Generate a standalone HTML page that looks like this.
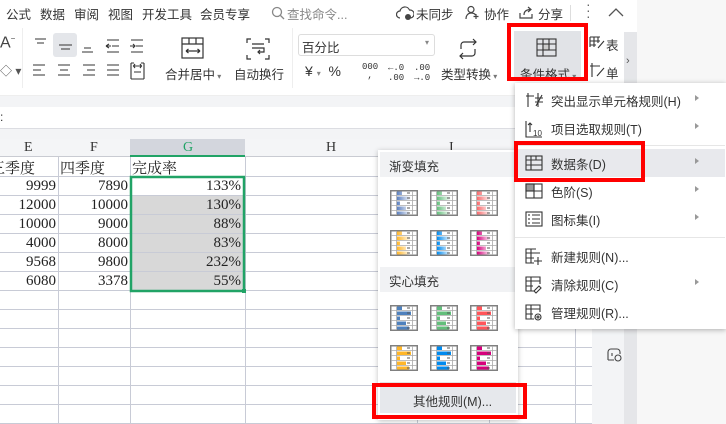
<!DOCTYPE html>
<html><head><meta charset="utf-8"><style>
*{margin:0;padding:0;box-sizing:border-box}
body{width:726px;height:424px;position:relative;overflow:hidden;background:#f7f7f7;font-family:"Liberation Sans","Noto Sans CJK SC",sans-serif;font-size:12px;color:#333}
.a{position:absolute}
.t{position:absolute;white-space:nowrap}
.cell{position:absolute;font-family:"Liberation Serif","Noto Serif CJK SC",serif;font-size:15px;color:#222;text-align:right;white-space:nowrap}
.mi{position:absolute;left:0;width:210px;height:28px}
.mi span{position:absolute;left:36px;top:5px;font-size:12.5px;color:#333}
.mi b{position:absolute;left:180px;top:9px;width:0;height:0;border-left:4px solid #999;border-top:3px solid transparent;border-bottom:3px solid transparent}
.mi svg{position:absolute;left:10px;top:6px}
.tm{position:absolute;top:4px;font-size:12.5px;color:#333;white-space:nowrap}
</style></head><body>
<div class="a" style="left:0;top:0;width:637px;height:424px;background:#fff"></div>
<div class="tm" style="left:6px">公式</div>
<div class="tm" style="left:40px">数据</div>
<div class="tm" style="left:74px">审阅</div>
<div class="tm" style="left:108px">视图</div>
<div class="tm" style="left:142px">开发工具</div>
<div class="tm" style="left:200px">会员专享</div>
<svg class="a" style="left:271px;top:6px" width="14" height="14"><circle cx="6" cy="6" r="4.5" fill="none" stroke="#888" stroke-width="1.3"/><path d="M9.5 9.5L13 13" stroke="#888" stroke-width="1.3"/></svg>
<div class="t" style="left:287px;top:4px;font-size:12.5px;color:#888">查找命令...</div>
<svg class="a" style="left:396px;top:6px" width="18" height="14"><path d="M4 12a3.5 3.5 0 0 1 0-7a5 5 0 0 1 9.5-1a4 4 0 0 1 1 8" fill="none" stroke="#444" stroke-width="1.2"/><circle cx="12" cy="11" r="3" fill="#444"/></svg>
<div class="t" style="left:416px;top:4px;font-size:12.5px">未同步</div>
<svg class="a" style="left:465px;top:5px" width="16" height="15"><circle cx="6" cy="4.5" r="3" fill="none" stroke="#444" stroke-width="1.2"/><path d="M1 14c0-4 2.5-6 5-6s4 1 4.5 2M11 9v5M8.5 11.5h5" fill="none" stroke="#444" stroke-width="1.2"/></svg>
<div class="t" style="left:484px;top:4px;font-size:12.5px">协作</div>
<svg class="a" style="left:518px;top:5px" width="16" height="15"><path d="M2 8v5h12V9M6 10c0-4 3-5.5 7-5.5M10 2l3 2.5-3 2.5" fill="none" stroke="#444" stroke-width="1.2"/></svg>
<div class="t" style="left:538px;top:4px;font-size:12.5px">分享</div>
<div class="a" style="left:570px;top:5px;width:1px;height:16px;background:#ddd"></div>
<div class="t" style="left:586px;top:1px;font-size:14px;color:#666;line-height:6px">·<br>·<br>·</div>
<svg class="a" style="left:608px;top:7px" width="16" height="10"><path d="M1 9l7-7 7 7" fill="none" stroke="#555" stroke-width="1.3"/></svg>
<div class="t" style="left:0;top:34px;font-size:16px;color:#444">A<sup style="font-size:8px">−</sup></div>
<div class="t" style="left:0;top:62px;font-size:12px;color:#555">◇ ▾</div>
<div class="a" style="left:22px;top:28px;width:1px;height:60px;background:#eee"></div>
<div class="a" style="left:53px;top:33px;width:24px;height:24px;background:#e4e6ea;border-radius:3px"></div>
<svg class="a" style="left:30px;top:35px" width="125" height="24" stroke="#333" stroke-width="1.1" fill="none">
<path d="M5 4h11M7 8h7"/><path d="M29 10h13M31 14h9"/><path d="M54 13h7M52 17h11"/><path d="M77 5h12M77 17h12M82 11h7M76 11l3-2M76 11l3 2M76 11h5"/><path d="M101 5h12M101 17h12M106 11h7M100 11h5M103 9l2 2-2 2"/></svg>
<svg class="a" style="left:30px;top:60px" width="125" height="22" stroke="#333" stroke-width="1.1" fill="none">
<path d="M3 5h12M3 10h8M3 15h12"/><path d="M28 5h12M30 10h8M28 15h12"/><path d="M53 5h12M57 10h8M53 15h12"/><path d="M77 5h12M77 10h12M77 15h12"/><path d="M101 3v16M114 3v16M101 3h3M111 3h3M101 19h13M104 6h7M105 4l-1.5 2 1.5 2M110 4l1.5 2-1.5 2M104 12h7"/></svg>
<svg class="a" style="left:180px;top:36px" width="26" height="26" stroke="#333" stroke-width="1.2" fill="none"><rect x="2" y="2" width="21" height="20"/><path d="M2 8h21M9 2v6M16 2v6M6 15h14M6 15l2.5-2M6 15l2.5 2M20 15l-2.5-2M20 15l-2.5 2"/></svg>
<div class="t" style="left:165px;top:64px;font-size:12.5px">合并居中<span style="font-size:8px;color:#777"> ▾</span></div>
<svg class="a" style="left:245px;top:37px" width="26" height="24" stroke="#333" stroke-width="1.2" fill="none"><path d="M2 6V2h4M20 2h4v4M2 18v4h4M24 18v4h-4M7 7h12M7 11h12v4h-6M15 13l-2 2 2 2"/></svg>
<div class="t" style="left:234px;top:64px;font-size:12.5px">自动换行</div>
<div class="a" style="left:292px;top:28px;width:1px;height:60px;background:#eee"></div>
<div class="a" style="left:298px;top:34px;width:137px;height:22px;border:1px solid #ddd;border-radius:3px"></div>
<div class="t" style="left:302px;top:37px;font-size:12.5px">百分比</div>
<div class="t" style="left:425px;top:38px;font-size:8px;color:#888">▾</div>
<div class="t" style="left:305px;top:63px;font-size:14px">¥ <span style="font-size:8px;color:#888">▾</span>&nbsp; %</div>
<div class="t" style="left:362px;top:63px;font-size:9px;line-height:9px;font-family:'Liberation Mono',monospace">000<br>&nbsp;,</div>
<div class="t" style="left:388px;top:63px;font-size:9px;line-height:10px;font-family:'Liberation Mono',monospace">←.0<br>.00</div>
<div class="t" style="left:414px;top:63px;font-size:9px;line-height:10px;font-family:'Liberation Mono',monospace">.00<br>→.0</div>
<svg class="a" style="left:456px;top:37px" width="24" height="24" stroke="#333" stroke-width="1.2" fill="none"><path d="M5 12V8a3 3 0 0 1 3-3h12M17 2l3 3-3 3M19 12v4a3 3 0 0 1-3 3H4M7 16l-3 3 3 3"/></svg>
<div class="t" style="left:441px;top:64px;font-size:12.5px">类型转换<span style="font-size:8px;color:#777"> ▾</span></div>
<div class="a" style="left:514px;top:31px;width:67px;height:48px;background:#e1e3e7"></div>
<svg class="a" style="left:536px;top:38px" width="22" height="20" stroke="#333" stroke-width="1.1" fill="none"><rect x="1" y="1" width="19" height="17"/><path d="M1 6h19M1 12h19M7 1v17M13 1v11"/><rect x="7" y="6" width="6" height="6" fill="#ccc"/></svg>
<div class="t" style="left:520px;top:64px;font-size:12.5px">条件格式<span style="font-size:8px;color:#777"> ▾</span></div>
<div class="a" style="left:507px;top:23px;width:81px;height:58px;border:4px solid #f00"></div>
<svg class="a" style="left:589px;top:36px" width="16" height="14" stroke="#333" stroke-width="1.1" fill="none"><path d="M1 1h10M1 5h10M1 9h6M1 1v10M5 1v10M9 1v6M15 5l-6 7"/></svg>
<div class="t" style="left:606px;top:35px;font-size:12.5px">表</div>
<svg class="a" style="left:589px;top:62px" width="16" height="16" stroke="#333" stroke-width="1.1" fill="none"><path d="M3 1v14M1 4h10M15 6l-7 8"/></svg>
<div class="t" style="left:606px;top:63px;font-size:12.5px">单</div>
<div class="a" style="left:624px;top:32px;width:13px;height:392px;background:#e5e6e9"></div>
<div class="t" style="left:626px;top:55px;font-size:11px;color:#555">›</div>
<div class="a" style="left:0;top:95px;width:624px;height:12px;background:#f3f4f6;border-top:1px solid #eee"></div>
<div class="a" style="left:0;top:107px;width:624px;height:22px;background:#fff;border-bottom:1px solid #dcdde2"></div>
<div class="t" style="left:0;top:110px;font-size:12px">:</div>
<div class="a" style="left:0;top:129px;width:624px;height:10px;background:#f3f4f6"></div>
<div class="a" style="left:0;top:139px;width:592px;height:18px;background:#f4f5f7;border-bottom:1px solid #c9cbd2"></div>
<div class="a" style="left:130px;top:139px;width:115px;height:18px;background:#d3d6dd;border-bottom:2px solid #21a366"></div>
<div class="t" style="left:24px;top:140px;font-family:'Liberation Serif',serif;font-size:14px">E</div>
<div class="t" style="left:90px;top:140px;font-family:'Liberation Serif',serif;font-size:14px">F</div>
<div class="t" style="left:183px;top:140px;font-family:'Liberation Serif',serif;font-size:14px;color:#21a366">G</div>
<div class="t" style="left:326px;top:140px;font-family:'Liberation Serif',serif;font-size:14px">H</div>
<div class="t" style="left:449px;top:140px;font-family:'Liberation Serif',serif;font-size:14px">I</div>
<svg class="a" style="left:0;top:157px" width="592" height="267">
<g stroke="#c8cbd6" stroke-width="1">
<path d="M0 19.5h592M0 38.5h592M0 57.5h592M0 76.5h592M0 95.5h592M0 114.5h592M0 133.5h592M0 152.5h592M0 171.5h592M0 190.5h592M0 209.5h592M0 228.5h592M0 247.5h592M0 266.5h592"/>
<path d="M58.5 0v267M130.5 0v267M245.5 0v267M417.5 0v267M489.5 0v267M575.5 0v267"/>
</g>
<rect x="132" y="39" width="112" height="95" fill="#d8d8d8"/>
<g stroke="#c8cbd6"><path d="M132 57.5h112M132 76.5h112M132 95.5h112M132 114.5h112"/></g>
<rect x="131" y="20" width="113" height="114" fill="none" stroke="#21a366" stroke-width="2.5"/>
<rect x="242" y="132" width="4" height="4" fill="#21a366"/>
</svg>
<div class="a" style="left:592px;top:139px;width:32px;height:285px;background:#f3f4f6"></div>
<div class="cell" style="left:-10px;top:157px;text-align:left;font-family:'Noto Serif CJK SC',serif">三季度</div>
<div class="cell" style="left:60px;top:157px;text-align:left;font-family:'Noto Serif CJK SC',serif">四季度</div>
<div class="cell" style="left:132px;top:157px;text-align:left;font-family:'Noto Serif CJK SC',serif">完成率</div>
<div class="cell" style="left:0;top:178px;width:56px">9999</div>
<div class="cell" style="left:0;top:197px;width:56px">12000</div>
<div class="cell" style="left:0;top:216px;width:56px">10000</div>
<div class="cell" style="left:0;top:235px;width:56px">4000</div>
<div class="cell" style="left:0;top:254px;width:56px">9568</div>
<div class="cell" style="left:0;top:273px;width:56px">6080</div>
<div class="cell" style="left:60px;top:178px;width:68px">7890</div>
<div class="cell" style="left:60px;top:197px;width:68px">10000</div>
<div class="cell" style="left:60px;top:216px;width:68px">9000</div>
<div class="cell" style="left:60px;top:235px;width:68px">8000</div>
<div class="cell" style="left:60px;top:254px;width:68px">9800</div>
<div class="cell" style="left:60px;top:273px;width:68px">3378</div>
<div class="cell" style="left:132px;top:178px;width:109px">133%</div>
<div class="cell" style="left:132px;top:197px;width:109px">130%</div>
<div class="cell" style="left:132px;top:216px;width:109px">88%</div>
<div class="cell" style="left:132px;top:235px;width:109px">83%</div>
<div class="cell" style="left:132px;top:254px;width:109px">232%</div>
<div class="cell" style="left:132px;top:273px;width:109px">55%</div>
<svg class="a" style="left:606px;top:348px" width="16" height="14" stroke="#444" stroke-width="1.1" fill="none"><path d="M2 12V4a3 3 0 0 1 3-3h6a3 3 0 0 1 3 3v2M2 12h6M6 5v3"/><circle cx="12" cy="10" r="3"/></svg>
<div class="a" style="left:378px;top:150px;width:140px;height:270px;background:#fff;box-shadow:0 1px 5px rgba(0,0,0,.25)"></div>
<div class="a" style="left:380px;top:152px;width:136px;height:25px;background:#f1f2f4"></div>
<div class="t" style="left:389px;top:156px;font-size:12.5px">渐变填充</div>
<div class="a" style="left:380px;top:267px;width:136px;height:25px;background:#f1f2f4"></div>
<div class="t" style="left:389px;top:271px;font-size:12.5px">实心填充</div>
<div class="a" style="left:380px;top:382px;width:136px;height:1px;background:#e3e3e3"></div>
<div class="a" style="left:380px;top:386px;width:136px;height:27px;background:#e6e8ec"></div>
<div class="t" style="left:413px;top:391px;font-size:12.5px">其他规则(M)...</div>
<div class="a" style="left:372px;top:383px;width:155px;height:36px;border:4px solid #f00"></div>
<svg class="a" style="left:378px;top:150px" width="140" height="230">
<defs>
<linearGradient id="g1"><stop offset="0" stop-color="#5b7fbf"/><stop offset="1" stop-color="#fff"/></linearGradient>
<linearGradient id="g2"><stop offset="0" stop-color="#63be7b"/><stop offset="1" stop-color="#fff"/></linearGradient>
<linearGradient id="g3"><stop offset="0" stop-color="#f8696b"/><stop offset="1" stop-color="#fff"/></linearGradient>
<linearGradient id="g4"><stop offset="0" stop-color="#ffb628"/><stop offset="1" stop-color="#fff"/></linearGradient>
<linearGradient id="g5"><stop offset="0" stop-color="#008aef"/><stop offset="1" stop-color="#fff"/></linearGradient>
<linearGradient id="g6"><stop offset="0" stop-color="#d6007b"/><stop offset="1" stop-color="#fff"/></linearGradient>
<g id="grid" fill="none" stroke="#808080"><rect x="0.75" y="0.75" width="26.5" height="24.5" stroke-width="1.5"/><path d="M6.5 1v24M22.5 1v24M1 5.5h26M1 10.5h26M1 15.5h26M1 20.5h26" stroke-width="0.8" stroke="#aaa"/><path d="M17 3h3M17 8h3M17 13h3M17 18h3M17 23h3" stroke="#555"/></g>
<path id="b" d="M7 1.5h5v3.5h-5zM7 6.5h14v3.5h-14zM7 11.5h3v3.5h-3zM7 16.5h9v3.5h-9zM7 21.5h12v3.5h-12z"/>
</defs>
<g transform="translate(12,40)"><use href="#b" fill="url(#g1)"/><use href="#grid"/></g>
<g transform="translate(52,40)"><use href="#b" fill="url(#g2)"/><use href="#grid"/></g>
<g transform="translate(92,40)"><use href="#b" fill="url(#g3)"/><use href="#grid"/></g>
<g transform="translate(12,80)"><use href="#b" fill="url(#g4)"/><use href="#grid"/></g>
<g transform="translate(52,80)"><use href="#b" fill="url(#g5)"/><use href="#grid"/></g>
<g transform="translate(92,80)"><use href="#b" fill="url(#g6)"/><use href="#grid"/></g>
<g transform="translate(12,155)"><use href="#b" fill="#4f81bd"/><use href="#grid"/></g>
<g transform="translate(52,155)"><use href="#b" fill="#63be7b"/><use href="#grid"/></g>
<g transform="translate(92,155)"><use href="#b" fill="#ff555a"/><use href="#grid"/></g>
<g transform="translate(12,195)"><use href="#b" fill="#ffb628"/><use href="#grid"/></g>
<g transform="translate(52,195)"><use href="#b" fill="#008aef"/><use href="#grid"/></g>
<g transform="translate(92,195)"><use href="#b" fill="#d6007b"/><use href="#grid"/></g>
</svg>
<div class="a" style="left:515px;top:83px;width:211px;height:246px;background:#fff;box-shadow:0 1px 5px rgba(0,0,0,.3)">
<div class="mi" style="top:3px"><svg width="18" height="16" stroke="#333" stroke-width="1.1" fill="none"><path d="M3 1v14M1 4h8M13 1v14M10 6h8M10 10h8M17 3l-6 11"/></svg><span>突出显示单元格规则(H)</span><b></b></div>
<div class="mi" style="top:31px"><svg width="18" height="18" stroke="#333" stroke-width="1.1" fill="none"><path d="M1 1v16h16M5 12V3M3 5l2-2 2 2"/><text x="8" y="16" font-size="8" fill="#333" stroke="none">10</text></svg><span>项目选取规则(T)</span><b></b></div>
<div class="a" style="left:0;top:62px;width:210px;height:1px;background:#e6e6e6"></div>
<div class="mi" style="top:66px;background:#e8e9ed"><svg width="18" height="16" stroke="#333" stroke-width="1.1" fill="none"><rect x="1" y="1" width="16" height="14"/><path d="M1 5h16M1 10h16M6 1v14M11 1v4"/></svg><span>数据条(D)</span><b></b></div>
<div class="mi" style="top:94px"><svg width="18" height="16" stroke="#333" stroke-width="1.1" fill="none"><rect x="1" y="1" width="16" height="14"/><path d="M1 8h16M9 1v14"/><rect x="1" y="1" width="8" height="7" fill="#999"/></svg><span>色阶(S)</span><b></b></div>
<div class="mi" style="top:122px"><svg width="18" height="16" stroke="#333" stroke-width="1.1" fill="none"><rect x="1" y="1" width="16" height="14"/><path d="M7 4h8M7 8h8M7 12h8M4 3v2M4 7v2M4 11v2"/></svg><span>图标集(I)</span><b></b></div>
<div class="a" style="left:0;top:154px;width:210px;height:1px;background:#e6e6e6"></div>
<div class="mi" style="top:159px"><svg width="18" height="18" stroke="#333" stroke-width="1.1" fill="none"><path d="M11 1H1v14h8M1 5h14M6 1v14M1 10h8M13 9v8M9 13h8"/></svg><span>新建规则(N)...</span></div>
<div class="mi" style="top:187px"><svg width="18" height="18" stroke="#333" stroke-width="1.1" fill="none"><path d="M9 15H1V1h14v7M1 5h14M6 1v14M1 10h7M11 17l5-5-2-2-5 5z"/></svg><span>清除规则(C)</span><b></b></div>
<div class="mi" style="top:215px"><svg width="18" height="18" stroke="#333" stroke-width="1.1" fill="none"><path d="M9 15H1V1h14v7M1 5h14M6 1v14M1 10h7"/><circle cx="13" cy="13" r="3"/><circle cx="13" cy="13" r="1"/></svg><span>管理规则(R)...</span></div>
</div>
<div class="a" style="left:514px;top:141px;width:131px;height:41px;border:4px solid #f00"></div>
</body></html>
